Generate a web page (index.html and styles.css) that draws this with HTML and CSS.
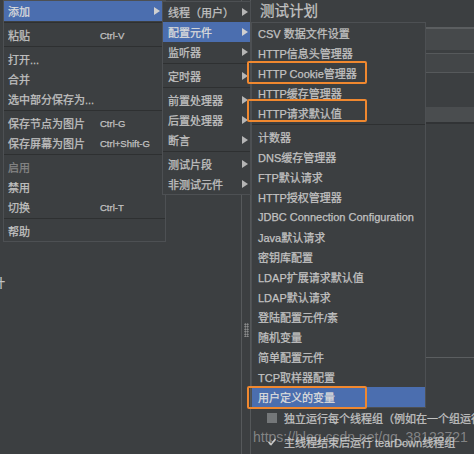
FILE: index.html
```html
<!DOCTYPE html>
<html lang="zh">
<head>
    <meta charset="UTF-8">
    <meta name="viewport" content="width=device-width, initial-scale=1.0">
    <title>测试计划 - 添加配置元件</title>
    <link rel="stylesheet" href="styles.css">
</head>
<body>
    <div class="app">
        <div class="tree"><span class="tree-label">计</span></div>
        <div class="splitter"><span class="grip"></span></div>
        <div class="main">
            <div class="title">测试计划</div>
            <div class="field f1"></div>
            <div class="field f2"></div>
            <div class="field f3"></div>
            <div class="table-area"></div>
            <div class="check-row"><span class="box"></span>独立运行每个线程组（例如在一个组运行结束后启动下一个）</div>
            <div class="check-row"><span class="box checked"><svg width="10" height="10" viewBox="0 0 10 10"><polyline points="1.5,5 4,7.5 8.5,2" fill="none" stroke="#c4c4c4" stroke-width="1.6"/></svg></span>主线程结束后运行 tearDown线程组</div>
        </div>
    </div>

    <!-- 右键菜单 -->
    <ul class="menu menu-main">
        <li class="item active"><span class="label">添加</span><svg class="arrow" viewBox="0 0 6 8"><polygon points="0,0 6,4 0,8"/></svg></li>
        <li class="sep"></li>
        <li class="item"><span class="label">粘贴</span><span class="key">Ctrl-V</span></li>
        <li class="sep"></li>
        <li class="item"><span class="label">打开...</span></li>
        <li class="item"><span class="label">合并</span></li>
        <li class="item"><span class="label">选中部分保存为...</span></li>
        <li class="sep"></li>
        <li class="item"><span class="label">保存节点为图片</span><span class="key">Ctrl-G</span></li>
        <li class="item"><span class="label">保存屏幕为图片</span><span class="key">Ctrl+Shift-G</span></li>
        <li class="sep"></li>
        <li class="item disabled"><span class="label">启用</span></li>
        <li class="item"><span class="label">禁用</span></li>
        <li class="item"><span class="label">切换</span><span class="key">Ctrl-T</span></li>
        <li class="sep"></li>
        <li class="item"><span class="label">帮助</span></li>
    </ul>

    <ul class="menu menu-sub">
        <li class="item"><span class="label">线程（用户）</span><svg class="arrow" viewBox="0 0 6 8"><polygon points="0,0 6,4 0,8"/></svg></li>
        <li class="item active"><span class="label">配置元件</span><svg class="arrow" viewBox="0 0 6 8"><polygon points="0,0 6,4 0,8"/></svg></li>
        <li class="item"><span class="label">监听器</span><svg class="arrow" viewBox="0 0 6 8"><polygon points="0,0 6,4 0,8"/></svg></li>
        <li class="sep"></li>
        <li class="item"><span class="label">定时器</span><svg class="arrow" viewBox="0 0 6 8"><polygon points="0,0 6,4 0,8"/></svg></li>
        <li class="sep"></li>
        <li class="item"><span class="label">前置处理器</span><svg class="arrow" viewBox="0 0 6 8"><polygon points="0,0 6,4 0,8"/></svg></li>
        <li class="item"><span class="label">后置处理器</span><svg class="arrow" viewBox="0 0 6 8"><polygon points="0,0 6,4 0,8"/></svg></li>
        <li class="item"><span class="label">断言</span><svg class="arrow" viewBox="0 0 6 8"><polygon points="0,0 6,4 0,8"/></svg></li>
        <li class="sep"></li>
        <li class="item"><span class="label">测试片段</span><svg class="arrow" viewBox="0 0 6 8"><polygon points="0,0 6,4 0,8"/></svg></li>
        <li class="item"><span class="label">非测试元件</span><svg class="arrow" viewBox="0 0 6 8"><polygon points="0,0 6,4 0,8"/></svg></li>
    </ul>

    <ul class="menu menu-config">
        <li class="item">CSV 数据文件设置</li>
        <li class="item">HTTP信息头管理器</li>
        <li class="item">HTTP Cookie管理器</li>
        <li class="item">HTTP缓存管理器</li>
        <li class="item">HTTP请求默认值</li>
        <li class="sep"></li>
        <li class="item">计数器</li>
        <li class="item">DNS缓存管理器</li>
        <li class="item">FTP默认请求</li>
        <li class="item">HTTP授权管理器</li>
        <li class="item">JDBC Connection Configuration</li>
        <li class="item">Java默认请求</li>
        <li class="item">密钥库配置</li>
        <li class="item">LDAP扩展请求默认值</li>
        <li class="item">LDAP默认请求</li>
        <li class="item">登陆配置元件/素</li>
        <li class="item">随机变量</li>
        <li class="item">简单配置元件</li>
        <li class="item">TCP取样器配置</li>
        <li class="item active">用户定义的变量</li>
    </ul>

    <!-- 标注框 -->
    <div class="mark mark-cookie"></div>
    <div class="mark mark-default"></div>
    <div class="mark mark-vars"></div>

    <div class="watermark">https://blog.csdn.net/qq_38123721</div>
</body>
</html>
```

FILE: styles.css
```css
* {
    box-sizing: border-box;
}
body {
    margin: 0;
    width: 474px;
    height: 454px;
    overflow: hidden;
    position: relative;
    background: #3c3f41;
    font-family: "Liberation Sans", "Noto Sans CJK SC", sans-serif;
    font-size: 11px;
    color: #c2c2c2;
    -webkit-text-stroke: 0.25px;
}
.app {
    display: flex;
    height: 454px;
}
.tree {
    width: 242px;
    flex: none;
    border-right: 1px solid #56595b;
    padding-top: 277px;
    overflow: hidden;
}
.tree-label {
    display: block;
    margin-left: -7px;
    font-size: 12px;
    line-height: 14px;
}
.splitter {
    width: 8px;
    flex: none;
    padding-top: 323px;
    display: flex;
    justify-content: center;
}
.grip {
    width: 5px;
    height: 14px;
    background-image: radial-gradient(circle, #a0a0a0 0.7px, transparent 1.1px);
    background-size: 2.5px 2.5px;
}
.main {
    flex: 1;
    min-width: 0;
    border-left: 1px solid #55585a;
    overflow: hidden;
}
.title {
    height: 22px;
    line-height: 22px;
    padding-left: 9px;
    font-size: 14.5px;
}
.field {
    margin-left: 70px;
}
.f1 {
    margin-top: 5px;
    height: 23px;
    border-top: 2px solid #5b5e60;
    background: #46494b;
}
.f2 {
    margin-top: 3px;
    height: 20px;
    background: #434648;
    border-top: 1px solid #56595b;
    border-bottom: 1px solid #56595b;
}
.f3 {
    margin-top: 34px;
    height: 17px;
    background: #4a4d4f;
    border-bottom: 2px solid #313335;
}
.table-area {
    height: 234px;
    border-bottom: 1px solid #5b5e60;
}
.check-row {
    display: flex;
    align-items: center;
    height: 24px;
    padding-left: 16px;
    white-space: nowrap;
}
.table-area + .check-row {
    margin-top: 48px;
}
.box {
    width: 10px;
    height: 10px;
    flex: none;
    margin-right: 7px;
    background: #747779;
}
.box.checked {
    background: none;
    display: flex;
}

/* popup menus */
.menu {
    position: absolute;
    margin: 0;
    padding: 0;
    list-style: none;
    background: #3c3f41;
    border: 1px solid #4d5053;
}
.menu-main {
    left: 3px;
    top: 0;
    width: 163px;
}
.menu-sub {
    left: 162px;
    top: 1px;
    width: 89px;
}
.menu-config {
    left: 251px;
    top: 22px;
    width: 175px;
}
.item {
    display: flex;
    align-items: center;
    height: 20px;
    padding-left: 4px;
    white-space: nowrap;
}
.menu-sub .item {
    padding-left: 5px;
}
.menu-config .item {
    padding-left: 6px;
}
.item.active {
    background: #4b6eaf;
    color: #dcdcdc;
}
.item.disabled {
    color: #868686;
}
.sep {
    height: 1px;
    margin: 1px 0 2px;
    background: #2e3031;
}
.menu-main .label {
    width: 92px;
}
.key {
    font-size: 9.5px;
}
.arrow {
    width: 6px;
    height: 8px;
    margin-left: auto;
    fill: #b5b5b5;
}
.menu-main .arrow {
    margin-right: 5px;
}
.menu-sub .arrow {
    margin-right: 2px;
}
.active .arrow {
    fill: #d0d0d0;
}

/* orange annotation boxes */
.mark {
    position: absolute;
    left: 247px;
    width: 120px;
    height: 23px;
    border: 2.5px solid #f0882f;
    border-radius: 2px;
}
.mark-cookie {
    top: 61px;
}
.mark-default {
    top: 99px;
}
.mark-vars {
    top: 386px;
}
.watermark {
    position: absolute;
    left: 253px;
    top: 428px;
    font-size: 14px;
    line-height: 18px;
    color: rgba(220, 220, 220, 0.45);
    -webkit-text-stroke: 0;
    white-space: nowrap;
}
```
